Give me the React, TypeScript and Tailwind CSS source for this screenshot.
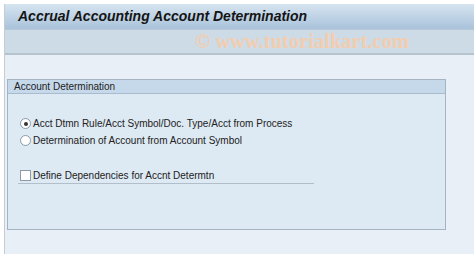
const font = { fontFamily: "'Liberation Sans', Arial, sans-serif" };

export default function App() {
  return (
    <div className="w-[474px] h-[257px] bg-white pt-[4px] pl-[4px] overflow-hidden" style={font}>
      <div className="w-[470px] h-[250px] flex flex-col border-l border-[#c3cdd6] bg-[#e8eff6]">
        <div className="h-[26px] flex items-center pl-[13px] bg-gradient-to-b from-[#d6e4f0] to-[#a9c3db] border-b border-[#b7c9d9]">
          <span className="text-[14px] font-bold italic text-[#151515]">
            Accrual Accounting Account Determination
          </span>
        </div>
        <div className="h-[25px] flex items-center bg-[#cddbe6] border-b-2 border-[#b5c3cf]">
          <span
            className="ml-[190px] text-[20.5px] font-bold text-[#f3cdae]"
            style={{ fontFamily: "'Liberation Serif', 'DejaVu Serif', serif" }}
          >
            © www.tutorialkart.com
          </span>
        </div>
        <div className="flex-1 pt-[24px] pl-[2px]">
          <div className="w-[439px] h-[151px] border border-[#a6b4c2] bg-[#dde9f3] flex flex-col">
            <div className="h-[14px] flex items-center pl-[6px] bg-[#c6d9ea] border-b border-[#a9bccd]">
              <span className="text-[10px] text-[#222]">Account Determination</span>
            </div>
            <div className="flex flex-col pl-[12px] pt-[21px] text-[10px] text-[#222]">
              <label className="flex items-center h-[17px] gap-[2px]">
                <span className="w-[11px] h-[11px] rounded-full border border-[#8d9aa6] bg-white flex items-center justify-center">
                  <span className="w-[4px] h-[4px] rounded-full bg-[#333]" />
                </span>
                <span>Acct Dtmn Rule/Acct Symbol/Doc. Type/Acct from Process</span>
              </label>
              <label className="flex items-center h-[17px] gap-[2px]">
                <span className="w-[11px] h-[11px] rounded-full border border-[#8d9aa6] bg-white" />
                <span>Determination of Account from Account Symbol</span>
              </label>
              <div className="mt-[18px] w-[296px] border-b border-[#b2bfcb] -ml-[2px] pl-[2px]">
                <label className="flex items-center h-[16px] gap-[2px]">
                  <span className="w-[11px] h-[11px] border border-[#8d9aa6] bg-white" />
                  <span>Define Dependencies for Accnt Determtn</span>
                </label>
              </div>
            </div>
          </div>
        </div>
      </div>
    </div>
  );
}
